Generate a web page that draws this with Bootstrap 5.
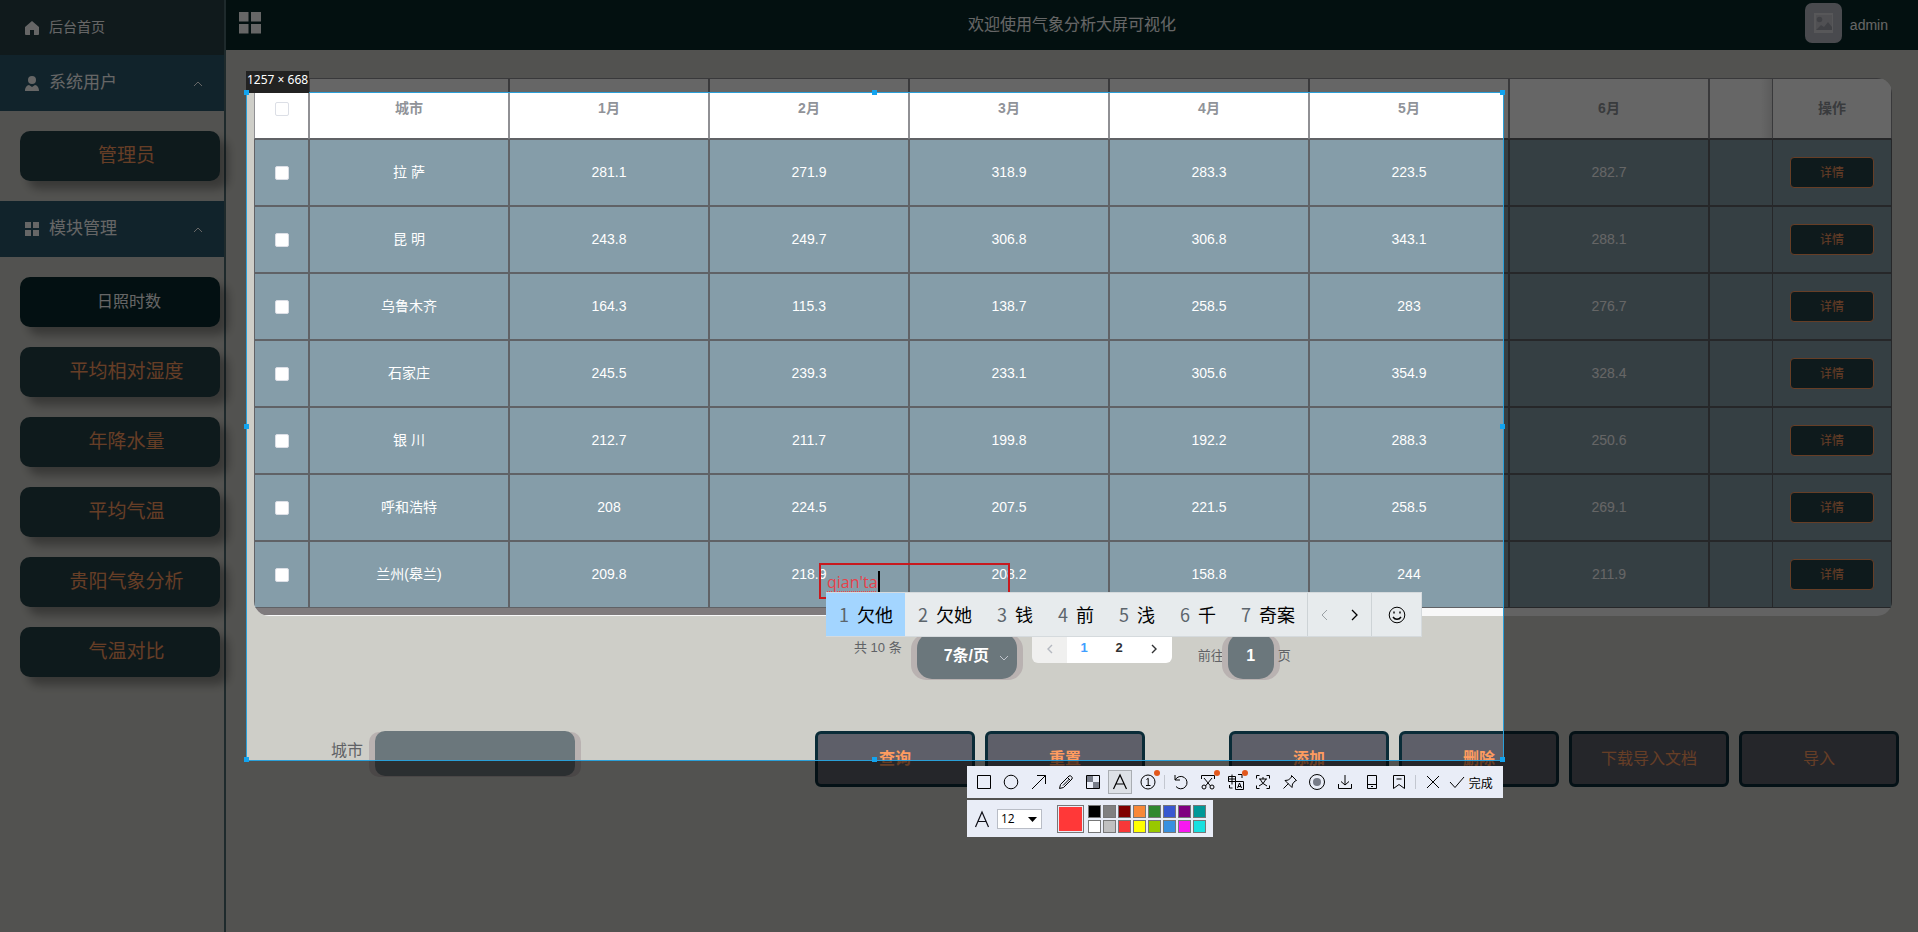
<!DOCTYPE html>
<html lang="zh-CN">
<head>
<meta charset="utf-8">
<meta name="viewport" content="width=device-width, initial-scale=1">
<title>气象分析大屏可视化</title>
<link href="https://cdn.jsdelivr.net/npm/bootstrap@5.3.0/dist/css/bootstrap.min.css" rel="stylesheet">
<style>
body{font:14px/1.5 "Liberation Sans","Noto Sans CJK SC",sans-serif;background:#cecec8;color:#606266}
button,input,select{font-family:inherit}
.shell{min-height:100vh}
/* sidebar */
.side{width:226px;border-right:2px solid #4d696f}
.side a{text-decoration:none;color:#fff}
.side-home{height:55px;padding-left:25px;background:#284348}
.side-group{height:56px;padding:0 21px 0 25px;background:#2b576b;color:#fff;font-size:17px;border:0}
.side-list{padding:20px 0;gap:20px;display:flex;flex-direction:column}
.side-list a{width:200px;height:50px;margin-left:20px;padding-left:13px;border-radius:10px;background:#254147;color:#ff9c60;font-size:19px;box-shadow:8px 8px 10px rgba(0,0,0,.32)}
.side-list a.current{background:#082a2d;color:#fff;font-size:16px;padding-left:18px}
.side-icon{width:14px;margin-right:10px}
/* top bar */
.topbar{height:50px;background:#082a2a;color:#fff;padding:0 30px 0 13px}
.topbar h1{font-size:16px}
.avatar{width:37px;height:40px;border-radius:7px;background:#b6b8c2;margin:-4px 8px 0 0}
/* table */
.page-body{padding:28px 26px 0 28px}
.grid-box{border-radius:15px;overflow:hidden;background:#f8f8f8}
.grid-table{width:100%;table-layout:fixed;border-collapse:separate;border-spacing:0;text-align:center}
.grid-table th{height:61px;padding:0;background:#fff;color:#909399;border:1px solid #909094;border-bottom-color:#606266}
.grid-table td{height:67px;padding:0;background:#859da9;color:#fff;border:1px solid #606266}
.grid-table .filler{border-right:0}
.grid-table th.filler{background:linear-gradient(90deg,#fff 82%,#e6e6e6)}
.grid-table input{appearance:none;display:block;width:14px;height:14px;margin:0 auto;border:1px solid #dcdfe6;border-radius:2px;background:#fff}
.detail-btn{width:84px;height:31px;border:1px solid #ff9c60;border-radius:4px;background:#254147;color:#ff9c60;font-size:12px;padding:0}
.scroll-track{height:8px}
.scroll-thumb{height:7px;width:50%;background:#7f7b7d}
/* pager */
.pager-row{padding-top:17px;height:115px;margin-left:600px}
.soft-field{background:#6b777c;color:#fff;border:0;border-radius:15px;box-shadow:-6px 1px #b9b2b1,6px 1px #b9b2b1}
.size-box{margin:0 15px}
.size-select{appearance:none;width:100px;height:46px;font-size:16px;font-weight:700;padding:0 0 0 27px}
.page-go{width:46px;height:46px;font-size:16px;font-weight:700;text-align:center;margin:0 4px}
.page-link-btn{width:35px;height:30px;background:#fff;border:0;padding:0;font-size:13px;font-weight:700;color:#303133}
.page-link-btn:disabled{background:#f0f0ef;color:#b4b8c0}
.small-label{font-size:13px;line-height:30px}
.go-label{margin-left:26px}
/* query form */
.query-row{padding-right:19px}
.city-field{width:200px;height:45px;border-radius:10px}
.act-btn{width:160px;height:56px;border:3px solid #0a2c38;border-radius:6px;background:#5e5f69;color:#ff9c60;font-size:16px;padding:0}
/* capture tool */
.capture{position:absolute;left:246px;top:92px;width:1258px;height:669px;border:1px solid #2a9fd8;box-shadow:0 0 0 4000px rgba(0,0,0,.6)}
.shade-clip{position:absolute;inset:0;overflow:hidden;pointer-events:none}
.handle{position:absolute;width:5px;height:5px;margin:-3px;background:#12a4f0}
.size-tip{position:absolute;left:-1px;bottom:100%;height:22px;padding:0 1px;background:#222;color:#fff;font:12px/18px "Noto Sans",sans-serif;white-space:nowrap}
.note-box{position:absolute;left:572px;top:470px;width:191px;height:36px;border:2px solid #c8191e;color:#e8404a;font:16px/34px "Open Sans",sans-serif;padding-left:6px}
.note-box span{text-decoration:underline dotted 1px;text-underline-offset:3px;border-right:2px solid #000}
.tool-pane{background:#e9edf7;color:#101018}
.ime{position:absolute;left:579px;top:499px;height:45px;background:#e7ebed;border:1px solid #d5dadd;border-left:0;font-family:"Noto Sans CJK SC",sans-serif;font-size:18px;color:#000}
.ime button{border:0;background:none;padding:0 12px 0 13px;display:flex;align-items:center;gap:8px;color:#000}
.ime button.on{background:#a3d5ff}
.ime i{font-style:normal;color:#5c656c;width:10px}
.ime .nav-key{padding:0;width:32px;justify-content:center}
.ime .cut{border-left:1px solid #cdd3d6}
.tools{position:absolute;right:0;top:673px;width:536px;height:32px;padding:0 10px 0 6px}
.tools button{border:0;background:none;padding:0;width:22px;height:22px;display:flex;align-items:center;justify-content:center;position:relative}
.tools button.on{background:#dde1e6;outline:1px solid #a9adb2}
.tools button.hot::after{content:"";position:absolute;right:-1px;top:-1px;width:6px;height:6px;border-radius:50%;background:#e2581d}
.tools svg,.ime svg{fill:none;stroke:currentColor;stroke-width:1}
.tools .done{width:auto;gap:4px;font:12px "Noto Sans CJK SC",sans-serif}
.palette{position:absolute;left:720px;top:707px;width:246px;height:37px;padding:0 7px}
.size-pick{width:45px;height:20px;border:1px solid #b9bdc6;background:#fff;font:12px "Open Sans",sans-serif;padding:0 0 0 3px;appearance:none}
.picked{width:27px;height:28px;border:1px solid #777;padding:1px;background:#ff3838 content-box}
.swatches{display:grid;grid-template-columns:repeat(8,13px);gap:2px}
.swatches button{width:13px;height:13px;border:1px solid #777;padding:0}
</style>
</head>
<body class="position-relative">
<div class="shell d-flex">
<aside class="side flex-shrink-0">
  <a href="#" class="side-home d-flex align-items-center">
    <svg class="side-icon" viewBox="0 0 14 14" height="14" fill="#fff"><path d="M7 0 0 6v7a1 1 0 0 0 1 1h4V9h4v5h4a1 1 0 0 0 1-1V6z"/></svg>后台首页</a>
  <button class="side-group w-100 d-flex align-items-center">
    <svg class="side-icon" viewBox="0 0 14 15" height="15" fill="#fff"><circle cx="7" cy="4" r="4"/><path d="M0 15c0-4 2-5.500 4-6l3 2 3-2c2 .5 4 2 4 6z"/></svg>系统用户
    <svg class="ms-auto" width="10" height="7" fill="none" stroke="#fff"><path d="M1 6l4-4 4 4"/></svg></button>
  <nav class="side-list">
    <a href="#" class="d-flex align-items-center justify-content-center">管理员</a>
  </nav>
  <button class="side-group w-100 d-flex align-items-center">
    <svg class="side-icon" viewBox="0 0 14 14" height="14" fill="#fff"><path d="M0 0h6v6H0zM8 0h6v6H8zM0 8h6v6H0zM8 8h6v6H8z"/></svg>模块管理
    <svg class="ms-auto" width="10" height="7" fill="none" stroke="#fff"><path d="M1 6l4-4 4 4"/></svg></button>
  <nav class="side-list">
    <a href="#" class="current d-flex align-items-center justify-content-center">日照时数</a>
    <a href="#" class="d-flex align-items-center justify-content-center">平均相对湿度</a>
    <a href="#" class="d-flex align-items-center justify-content-center">年降水量</a>
    <a href="#" class="d-flex align-items-center justify-content-center">平均气温</a>
    <a href="#" class="d-flex align-items-center justify-content-center">贵阳气象分析</a>
    <a href="#" class="d-flex align-items-center justify-content-center">气温对比</a>
  </nav>
</aside>
<div class="flex-grow-1">
  <header class="topbar d-flex align-items-center position-relative">
    <svg width="22" height="22" fill="#fff" class="mb-1"><path d="M0 0h9.500v9.500H0zM12 0h10v9.500H12zM0 12h9.500v9.500H0zM12 12h10v9.500H12z"/></svg>
    <h1 class="position-absolute start-0 end-0 text-center m-0 fw-normal">欢迎使用气象分析大屏可视化</h1>
    <div class="ms-auto d-flex align-items-center">
      <svg class="avatar" viewBox="0 0 37 40"><path fill="#dadade" d="M9 10h19v20H9z"/><path fill="#b6b8c2" d="M11 12h16v15H11z"/><path fill="#dadade" d="M11 12h16v15H11z" opacity=".5"/><circle cx="14.500" cy="16.500" r="2.800" fill="#a0a2ac"/><path fill="#a0a2ac" d="M11 27l5-5 3 2 4-5 4 5v3z"/></svg>
      <span>admin</span>
    </div>
  </header>
  <main>
    <div class="page-body">
      <div class="grid-box">
        <table class="grid-table">
          <colgroup><col style="width:55px"><col style="width:200px"><col style="width:200px"><col style="width:200px"><col style="width:200px"><col style="width:200px"><col style="width:200px"><col style="width:200px"><col><col style="width:120px"></colgroup>
          <thead><tr><th><input type="checkbox" aria-label="全选"></th><th>城市</th><th>1月</th><th>2月</th><th>3月</th><th>4月</th><th>5月</th><th>6月</th><th class="filler"></th><th>操作</th></tr></thead>
          <tbody>
          <tr><td><input type="checkbox" aria-label="拉萨"></td><td>拉 萨</td><td>281.1</td><td>271.9</td><td>318.9</td><td>283.3</td><td>223.5</td><td>282.7</td><td class="filler"></td><td><button class="detail-btn">详情</button></td></tr>
          <tr><td><input type="checkbox" aria-label="昆明"></td><td>昆 明</td><td>243.8</td><td>249.7</td><td>306.8</td><td>306.8</td><td>343.1</td><td>288.1</td><td class="filler"></td><td><button class="detail-btn">详情</button></td></tr>
          <tr><td><input type="checkbox" aria-label="乌鲁木齐"></td><td>乌鲁木齐</td><td>164.3</td><td>115.3</td><td>138.7</td><td>258.5</td><td>283</td><td>276.7</td><td class="filler"></td><td><button class="detail-btn">详情</button></td></tr>
          <tr><td><input type="checkbox" aria-label="石家庄"></td><td>石家庄</td><td>245.5</td><td>239.3</td><td>233.1</td><td>305.6</td><td>354.9</td><td>328.4</td><td class="filler"></td><td><button class="detail-btn">详情</button></td></tr>
          <tr><td><input type="checkbox" aria-label="银川"></td><td>银 川</td><td>212.7</td><td>211.7</td><td>199.8</td><td>192.2</td><td>288.3</td><td>250.6</td><td class="filler"></td><td><button class="detail-btn">详情</button></td></tr>
          <tr><td><input type="checkbox" aria-label="呼和浩特"></td><td>呼和浩特</td><td>208</td><td>224.5</td><td>207.5</td><td>221.5</td><td>258.5</td><td>269.1</td><td class="filler"></td><td><button class="detail-btn">详情</button></td></tr>
          <tr><td><input type="checkbox" aria-label="兰州"></td><td>兰州(皋兰)</td><td>209.8</td><td>218.9</td><td>208.2</td><td>158.8</td><td>244</td><td>211.9</td><td class="filler"></td><td><button class="detail-btn">详情</button></td></tr>
          </tbody>
        </table>
        <div class="scroll-track"><div class="scroll-thumb"></div></div>
      </div>
      <div class="pager-row d-flex align-items-start">
        <span class="small-label text-nowrap">共 10 条</span>
        <div class="position-relative size-box">
          <select class="soft-field size-select" aria-label="每页条数"><option>7条/页</option></select>
          <svg class="position-absolute" style="right:8px;top:22px" width="10" height="7" fill="none" stroke="#c0c4cc"><path d="M1 1l4 4 4-4"/></svg>
        </div>
        <nav class="d-flex rounded-bottom overflow-hidden" aria-label="分页">
          <button class="page-link-btn" disabled aria-label="上一页"><svg width="7" height="10" fill="none" stroke="currentColor" stroke-width="1.400"><path d="M6 1L2 5l4 4"/></svg></button>
          <button class="page-link-btn" style="color:#409eff">1</button>
          <button class="page-link-btn">2</button>
          <button class="page-link-btn" aria-label="下一页"><svg width="7" height="10" fill="none" stroke="currentColor" stroke-width="1.400"><path d="M1 1l4 4-4 4"/></svg></button>
        </nav>
        <label class="small-label go-label pt-2 text-nowrap" for="go">前往</label>
        <input id="go" class="soft-field page-go" value="1">
        <span class="small-label pt-2">页</span>
      </div>
    </div>
    <form class="query-row d-flex">
      <div style="margin-left:105px" class="d-flex me-auto">
        <label for="city" class="fs-6 pt-2 me-2">城市</label>
        <input id="city" class="soft-field city-field ms-1">
      </div>
      <div class="d-flex flex-shrink-0" style="gap:84px">
        <div class="d-flex" style="gap:10px"><button type="button" class="act-btn fw-bold">查询</button><button type="button" class="act-btn fw-bold">重置</button></div>
        <div class="d-flex" style="gap:10px"><button type="button" class="act-btn fw-bold">添加</button><button type="button" class="act-btn fw-bold">删除</button><button type="button" class="act-btn">下载导入文档</button><button type="button" class="act-btn">导入</button></div>
      </div>
    </form>
  </main>
</div>
</div>

<!-- capture selection, shade and its tools -->
<div class="shade-clip"><div class="capture">
  <div class="size-tip">1257 × 668</div>
  <b class="handle" style="left:0;top:0"></b><b class="handle" style="left:50%;top:0"></b><b class="handle" style="left:100%;top:0"></b>
  <b class="handle" style="left:0;top:50%"></b><b class="handle" style="left:100%;top:50%"></b>
  <b class="handle" style="left:0;top:100%"></b><b class="handle" style="left:50%;top:100%"></b><b class="handle" style="left:100%;top:100%"></b>
  <div class="note-box"><span>qian'ta</span></div>
  <div class="ime d-flex text-nowrap">
    <button class="on"><i>1</i>欠他</button><button><i>2</i>欠她</button><button><i>3</i>钱</button><button><i>4</i>前</button><button><i>5</i>浅</button><button><i>6</i>千</button><button><i>7</i>奇案</button>
    <button class="nav-key cut" aria-label="上一组"><svg width="8" height="14"><path d="M7 2L2 7l5 5" stroke="#9aa0a4"/></svg></button>
    <button class="nav-key" aria-label="下一组"><svg width="8" height="14"><path d="M1 2l5 5-5 5" stroke-width="1.300"/></svg></button>
    <button class="nav-key cut" style="width:50px" aria-label="表情"><svg width="18" height="18"><circle cx="9" cy="9" r="7.800"/><path d="M5 11c2 3 6 3 8 0M6 5.500v2M12 5.500v2" stroke-width="1.400"/></svg></button>
  </div>
  <div class="tools tool-pane d-flex align-items-center justify-content-between">
    <button aria-label="矩形"><svg width="16" height="16"><path d="M1.500 1.500h13v13h-13z"/></svg></button>
    <button aria-label="椭圆"><svg width="16" height="16"><circle cx="8" cy="8" r="6.800"/></svg></button>
    <button aria-label="箭头"><svg width="16" height="16"><path d="M1 15L14.500 1.500M6 1.500h8.500V10"/></svg></button>
    <button aria-label="画笔"><svg width="16" height="16"><path d="M1.500 14.500l1-4L11 2q1.200-.8 2.500.5t.5 2.500L5.500 13.500zM9.500 3.500l3 3M11.500 5L5 11.500"/></svg></button>
    <button aria-label="马赛克"><svg width="16" height="16"><path d="M1.500 1.500h13v13h-13z"/><path fill="#777c88" stroke="none" d="M2 2h6v6H2zM8 8h6v6H8z"/></svg></button>
    <button class="on" aria-label="文字"><svg width="16" height="18"><path d="M1.500 16L8 2l6.500 14M4 11h8" stroke-width="1.200"/></svg></button>
    <button class="hot" aria-label="序号"><svg width="18" height="18"><circle cx="9" cy="9" r="7"/><path d="M7.500 6.500L9.200 5.300v7M7 12.500h4.500"/></svg></button>
    <span style="border-left:1px solid #c3c7d0;height:14px"></span>
    <button aria-label="撤销"><svg width="16" height="16"><path d="M2 1v5h5M2.200 6A6.200 6.200 0 1 1 3 12.500"/></svg></button>
    <button class="hot" aria-label="裁剪"><svg width="16" height="16"><path d="M1.500 5V1.500h13V5M4 4l6.500 8M12 4l-6.500 8"/><circle cx="4" cy="13" r="2"/><circle cx="12" cy="13" r="2"/></svg></button>
    <button class="hot" aria-label="翻译"><svg width="18" height="18"><path d="M1.500 3.500h7v5h-7zM5 1.500v10M1.500 6h7M11 1.500h4V5M2.500 12v3h3M8.500 8.500h8v8h-8zM10.500 15l2-5 2 5M11 13.500h3"/></svg></button>
    <button aria-label="识别"><svg width="16" height="16"><path d="M1.500 4.500v-3h3M11.500 1.500h3v3M14.500 11.500v3h-3M4.500 14.500h-3v-3M4 5h8M8 3v2M11 5q-2 5-7 7M5 5q2 5 7 7"/></svg></button>
    <button aria-label="固定"><svg width="16" height="16"><path d="M9.500 1.500l5 5-1.500.5-2.500 3-.5 3.500L3 6.500 6.500 6l3-3zM6.500 9.500l-5 5"/></svg></button>
    <button aria-label="录制"><svg width="18" height="18"><circle cx="9" cy="9" r="7.500"/><circle cx="9" cy="9" r="4" fill="#777c88" stroke="none"/></svg></button>
    <button aria-label="下载"><svg width="16" height="16"><path d="M8 1v10M4 7.500L8 11l4-3.500M1.500 10v4.500h13V10"/></svg></button>
    <button aria-label="手机"><svg width="16" height="16"><path d="M3.500 1.500h9v13h-9zM3.500 10.500h9M7 12.500h2"/></svg></button>
    <button aria-label="收藏"><svg width="16" height="16"><path d="M2.500 1.500h11v13L8 10.500l-5.500 4zM5.500 5h5"/></svg></button>
    <span style="border-left:1px solid #c3c7d0;height:14px"></span>
    <button aria-label="取消"><svg width="16" height="16"><path d="M2 2l12 12M14 2L2 14"/></svg></button>
    <button class="done"><svg width="16" height="16"><path d="M1 8l5 5.500L15 3"/></svg>完成</button>
  </div>
  <div class="palette tool-pane d-flex align-items-center justify-content-between">
    <svg width="16" height="18" fill="none" stroke="currentColor" stroke-width="1.200"><path d="M1.500 17L8 2l6.500 15M4 11.500h8"/></svg>
    <div class="position-relative d-flex me-2"><select class="size-pick" aria-label="字号"><option>12</option></select><svg class="position-absolute" style="right:5px;top:8px" width="9" height="5"><path d="M0 0h9L4.500 5z"/></svg></div>
    <div class="d-flex align-items-center gap-1"><div class="picked"></div>
    <div class="swatches">
      <button style="background:#000"></button><button style="background:#808080"></button><button style="background:#800000"></button><button style="background:#f88838"></button><button style="background:#308830"></button><button style="background:#3858d0"></button><button style="background:#800080"></button><button style="background:#009898"></button>
      <button style="background:#fff"></button><button style="background:#c0c0c0"></button><button style="background:#f83838"></button><button style="background:#ffff00"></button><button style="background:#98c800"></button><button style="background:#3890e0"></button><button style="background:#f818f0"></button><button style="background:#18e0e0"></button>
    </div></div>
  </div>
</div></div>
<script src="https://cdn.jsdelivr.net/npm/bootstrap@5.3.0/dist/js/bootstrap.bundle.min.js"></script>
</body>
</html>
